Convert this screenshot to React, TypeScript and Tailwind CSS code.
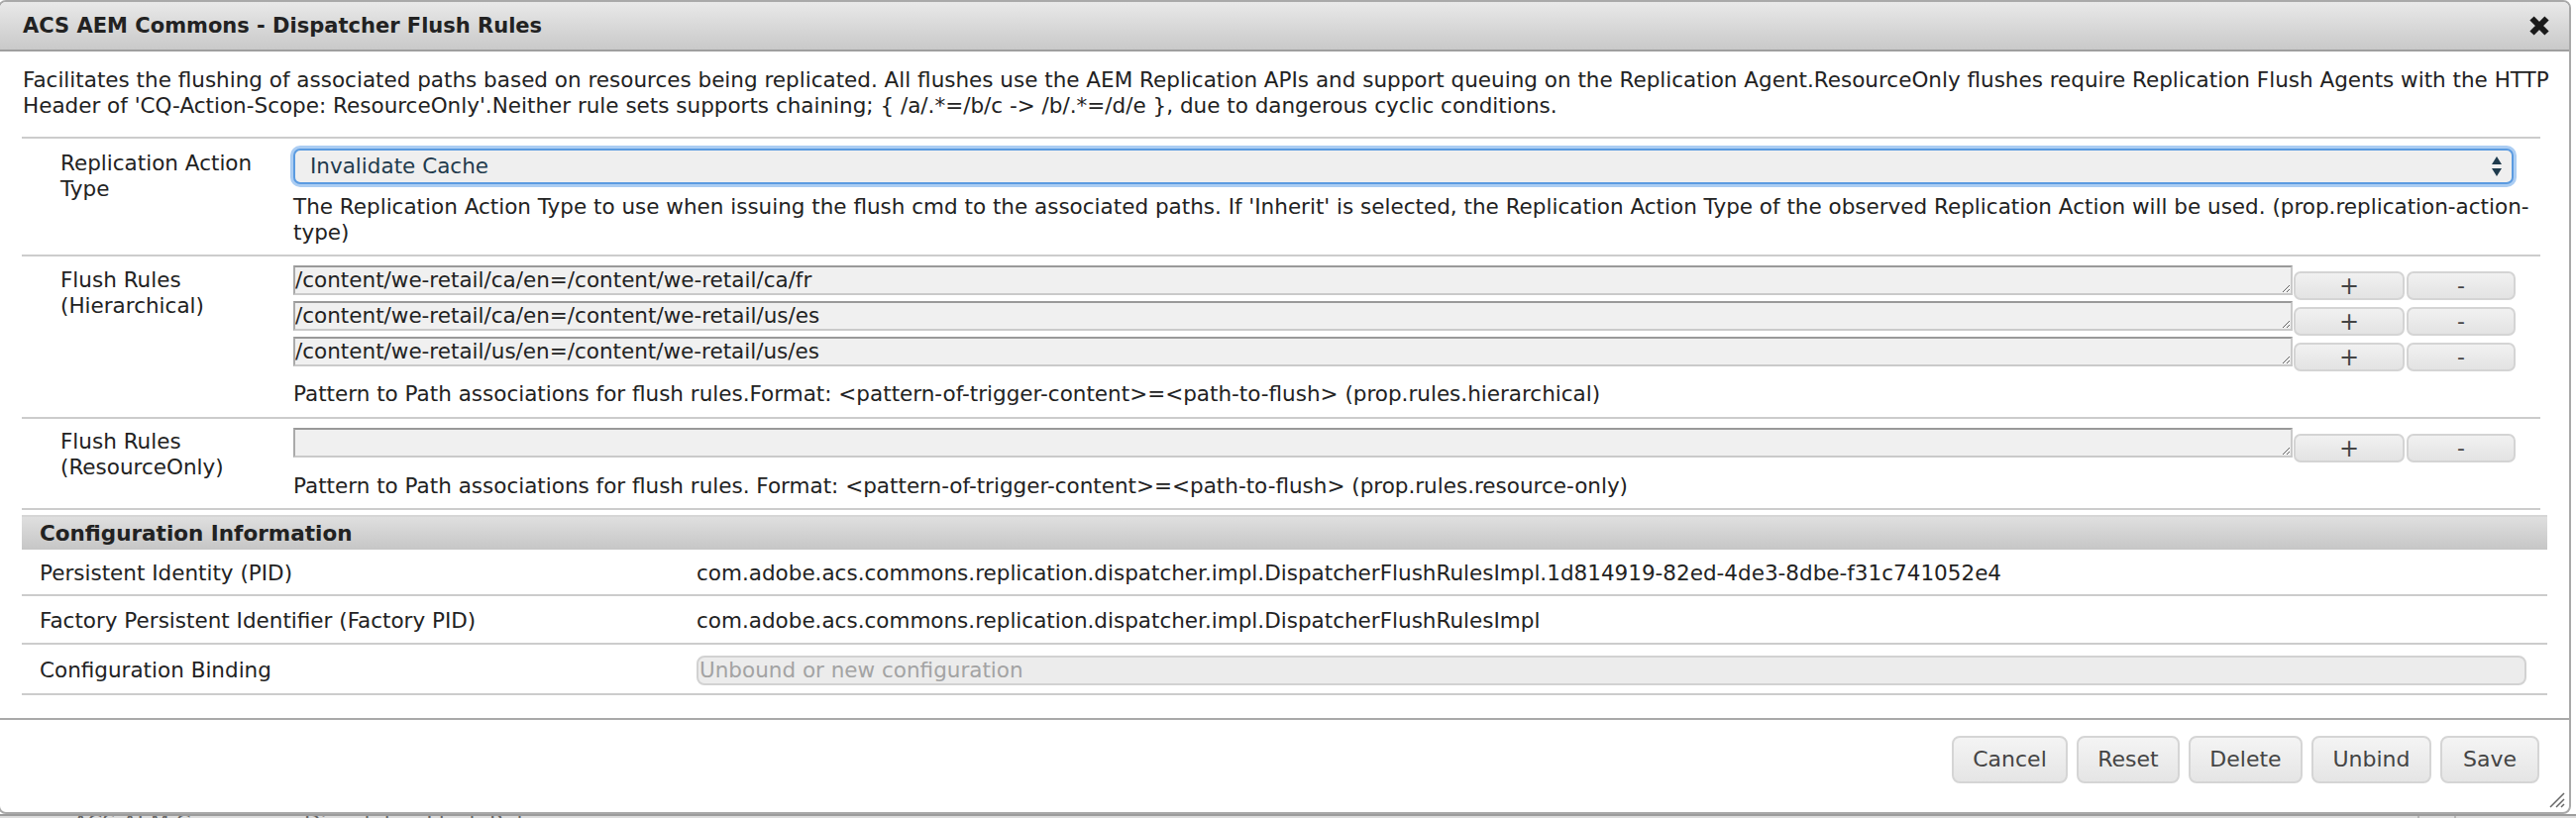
import React from "react";

const rules = [
  "/content/we-retail/ca/en=/content/we-retail/ca/fr",
  "/content/we-retail/ca/en=/content/we-retail/us/es",
  "/content/we-retail/us/en=/content/we-retail/us/es",
];

const intro =
  "Facilitates the flushing of associated paths based on resources being replicated. All flushes use the AEM Replication APIs and support queuing on the Replication Agent.ResourceOnly flushes require Replication Flush Agents with the HTTP Header of 'CQ-Action-Scope: ResourceOnly'.Neither rule sets supports chaining; { /a/.*=/b/c -> /b/.*=/d/e }, due to dangerous cyclic conditions.";

function RuleRow({ value }: { value: string }) {
  return (
    <div className="flex h-[36px] items-start">
      <textarea
        readOnly
        rows={1}
        value={value}
        className="w-[2018px] h-[30px] resize overflow-hidden bg-[#f0f0f0] border-2 border-[#cacaca] border-t-[#999] border-l-[#aaa] px-0 py-0 text-[21.5px] leading-[26px] text-[#222] outline-none"
      />
      <button className="ml-[1px] mt-[6px] w-[112px] h-[29px] rounded-[7px] border-2 border-[#d4d4d4] bg-gradient-to-b from-[#f1f1f1] to-[#e3e3e3] text-[24px] leading-none text-[#444]">
        +
      </button>
      <button className="ml-[2px] mt-[6px] w-[110px] h-[29px] rounded-[7px] border-2 border-[#d4d4d4] bg-gradient-to-b from-[#f1f1f1] to-[#e3e3e3] text-[22px] leading-none text-[#444]">
        -
      </button>
    </div>
  );
}

function FooterButton({ label, width }: { label: string; width: string }) {
  return (
    <button
      className={`${width} h-[48px] rounded-[8px] border-2 border-[#d5d5d5] bg-gradient-to-b from-[#f4f4f4] to-[#e5e5e5] text-[22px] text-[#444]`}
    >
      {label}
    </button>
  );
}

export default function App() {
  return (
    <div className="w-[2600px] h-[826px] overflow-hidden bg-white font-['DejaVu_Sans',Verdana,sans-serif] text-[21.5px] leading-[26px] text-[#222]">
      {/* Dialog */}
      <div className="relative ml-[-2px] w-[2597px] h-[822px] border-2 border-[#a9a9a9] rounded-[8px] bg-white">
        {/* Title bar */}
        <div className="flex h-[50px] items-center justify-between rounded-t-[6px] border-b-2 border-[#9f9f9f] bg-gradient-to-b from-[#e9e9e9] to-[#c9c9c9] pl-[23px] pr-[18px]">
          <span className="text-[21px] font-bold text-[#222]">ACS AEM Commons - Dispatcher Flush Rules</span>
          <svg width="24" height="24" viewBox="0 0 24 24">
            <path d="M4.5 4.5 L19.5 19.5 M19.5 4.5 L4.5 19.5" stroke="#1a1a1a" strokeWidth="6" />
          </svg>
        </div>

        {/* Content */}
        <div className="h-[675px] border-b-2 border-[#a9a9a9] pt-[16px]">
          <p className="pl-[23px] pr-[20px]">{intro}</p>

          {/* Properties */}
          <div className="ml-[22px] mt-[18px] w-[2542px]">
            <div className="flex border-t-2 border-[#cccccc] pb-[9px]">
              <div className="w-[274px] pl-[39px] pt-[12px]">
                Replication Action
                <br />
                Type
              </div>
              <div className="flex-1 pt-[10px]">
                <div className="relative w-[2241px]">
                  <select className="w-full h-[36px] appearance-none rounded-[7px] border-2 border-[#5b9be0] bg-[#efefef] pl-[15px] text-[21.5px] text-[#1f3b4d] outline-none shadow-[0_0_0_3px_#abcdf3]">
                    <option>Invalidate Cache</option>
                  </select>
                  <svg className="absolute right-[10px] top-[7px]" width="14" height="22" viewBox="0 0 14 22">
                    <path d="M7 1 L12 9 L2 9 Z M2 13 L12 13 L7 21 Z" fill="#1f3b4d" />
                  </svg>
                </div>
                <div className="mt-[10px]">
                  The Replication Action Type to use when issuing the flush cmd to the associated paths. If 'Inherit' is selected, the Replication Action Type of the observed Replication Action will be used. (prop.replication-action-type)
                </div>
              </div>
            </div>

            <div className="flex border-t-2 border-[#cccccc] pb-[10px]">
              <div className="w-[274px] pl-[39px] pt-[11px]">
                Flush Rules
                <br />
                (Hierarchical)
              </div>
              <div className="flex-1 pt-[9px]">
                {rules.map((r) => (
                  <RuleRow key={r} value={r} />
                ))}
                <div className="mt-[9px]">
                  {"Pattern to Path associations for flush rules.Format: <pattern-of-trigger-content>=<path-to-flush> (prop.rules.hierarchical)"}
                </div>
              </div>
            </div>

            <div className="flex border-y-2 border-[#cccccc] pb-[9px]">
              <div className="w-[274px] pl-[39px] pt-[10px]">
                Flush Rules
                <br />
                (ResourceOnly)
              </div>
              <div className="flex-1 pt-[9px]">
                <RuleRow value="" />
                <div className="mt-[10px]">
                  {"Pattern to Path associations for flush rules. Format: <pattern-of-trigger-content>=<path-to-flush> (prop.rules.resource-only)"}
                </div>
              </div>
            </div>
          </div>

          {/* Configuration information */}
          <div className="ml-[22px] mt-[5px] w-[2549px]">
            <div className="h-[35px] border-t-2 border-[#d6d6d6] bg-gradient-to-b from-[#dfdfdf] to-[#c6c6c6] pl-[18px] font-bold leading-[33px]">
              Configuration Information
            </div>
            <div className="flex h-[47px] items-center border-b-2 border-[#cccccc] pt-[3px]">
              <div className="w-[681px] pl-[18px]">Persistent Identity (PID)</div>
              <div>com.adobe.acs.commons.replication.dispatcher.impl.DispatcherFlushRulesImpl.1d814919-82ed-4de3-8dbe-f31c741052e4</div>
            </div>
            <div className="flex h-[49px] items-center border-b-2 border-[#cccccc] pt-[3px]">
              <div className="w-[681px] pl-[18px]">Factory Persistent Identifier (Factory PID)</div>
              <div>com.adobe.acs.commons.replication.dispatcher.impl.DispatcherFlushRulesImpl</div>
            </div>
            <div className="flex h-[51px] items-center border-b-2 border-[#cccccc] pt-[2px]">
              <div className="w-[681px] pl-[18px]">Configuration Binding</div>
              <input
                disabled
                placeholder="Unbound or new configuration"
                className="w-[1847px] h-[30px] rounded-[8px] border-2 border-[#d2d2d2] bg-[#ececec] px-[1px] text-[21.5px] placeholder:text-[#a3a3a3]"
              />
            </div>
          </div>
        </div>

        {/* Button pane */}
        <div className="flex justify-end gap-[9px] pr-[30px] pt-[16px]">
          <FooterButton label="Cancel" width="w-[117px]" />
          <FooterButton label="Reset" width="w-[104px]" />
          <FooterButton label="Delete" width="w-[115px]" />
          <FooterButton label="Unbind" width="w-[121px]" />
          <FooterButton label="Save" width="w-[100px]" />
        </div>

        <svg className="absolute right-[3px] bottom-[3px]" width="22" height="22" viewBox="0 0 22 22">
          <path d="M20 6 L6 20 M20 12 L12 20 M20 17 L17 20" stroke="#666" strokeWidth="1.5" />
        </svg>
      </div>

      {/* Page behind the dialog */}
      <div className="relative h-[4px] overflow-hidden border-t-2 border-[#9c9c9c] bg-[#dcdcdc]">
        <div className="ml-[74px] mt-[-3px] leading-[20px] text-[#666]">ACS AEM Commons - Dispatcher Flush Rules</div>
        <div className="absolute left-[2440px] top-0 h-full w-[2px] bg-[#b5b5b5]" />
        <div className="absolute left-[2477px] top-0 h-full w-[2px] bg-[#b5b5b5]" />
      </div>
    </div>
  );
}
